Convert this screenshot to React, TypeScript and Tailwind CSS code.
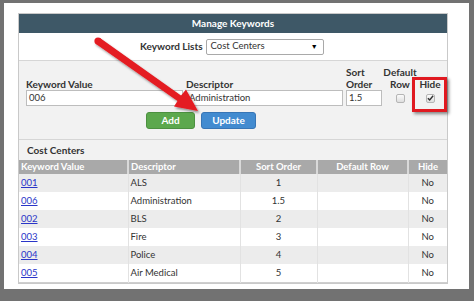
import React from 'react';

const ROWS = [
  { value: '001', descriptor: 'ALS', sort: '1', hide: 'No' },
  { value: '006', descriptor: 'Administration', sort: '1.5', hide: 'No' },
  { value: '002', descriptor: 'BLS', sort: '2', hide: 'No' },
  { value: '003', descriptor: 'Fire', sort: '3', hide: 'No' },
  { value: '004', descriptor: 'Police', sort: '4', hide: 'No' },
  { value: '005', descriptor: 'Air Medical', sort: '5', hide: 'No' },
];

function Checkbox({ checked }: { checked?: boolean }) {
  return (
    <span className="flex h-[9px] w-[9px] items-center justify-center rounded-[2px] border border-[#b5b5b5] bg-gradient-to-b from-[#fbfbfb] to-[#dedede]">
      {checked && (
        <svg width="8" height="8" viewBox="0 0 8 8">
          <path d="M1 4.2 L3.1 6.3 L7 1.5" fill="none" stroke="#333" strokeWidth="1.6" />
        </svg>
      )}
    </span>
  );
}

export default function App() {
  return (
    <div className="relative h-[301px] w-[474px] overflow-hidden bg-[#727272] pb-[12px] pl-[4px] pr-[5px] pt-[3px] font-['Lato',sans-serif] text-[9.5px] text-[#333]">
      {/* White frame */}
      <div className="h-[286px] w-[465px] bg-white pl-[14px] pt-[10px]">
        {/* Panel */}
        <div className="flex w-[430px] flex-col border border-[#c9c9c9]">
          {/* Header */}
          <div className="flex h-[19px] items-center justify-center bg-[#3e5867] text-[10px] font-bold text-white">
            Manage Keywords
          </div>

          {/* Keyword list picker */}
          <div className="flex h-[27px] items-center gap-[3px] bg-white pl-[121px]">
            <span className="text-[10px] font-bold">Keyword Lists</span>
            <div className="flex h-[16px] w-[118px] items-center justify-between rounded-[2px] border border-[#a9a9a9] bg-white pl-[4px] pr-[5px]">
              <span>Cost Centers</span>
              <span className="text-[7px] text-black">▼</span>
            </div>
          </div>

          {/* Edit form */}
          <div className="flex flex-col gap-[6px] border-t border-[#d6d6d6] bg-[#f2f2f2] pb-[10px] pl-[7px] pt-[5px]">
            <div className="flex items-end gap-[3px] leading-[12px]">
              <div className="flex w-[157px] flex-col">
                <span className="text-[10px] font-bold">Keyword Value</span>
                <div className="flex h-[16px] items-center border border-[#bdbdbd] bg-white pl-[2px]">006</div>
              </div>
              <div className="flex w-[157px] flex-col">
                <span className="text-[10px] font-bold">Descriptor</span>
                <div className="flex h-[16px] items-center border border-[#bdbdbd] bg-white pl-[2px]">Administration</div>
              </div>
              <div className="flex w-[36px] flex-col">
                <span className="text-[10px] font-bold">Sort</span>
                <span className="text-[10px] font-bold">Order</span>
                <div className="flex h-[16px] items-center border border-[#bdbdbd] bg-white pl-[2px]">1.5</div>
              </div>
              <div className="flex w-[30px] flex-col items-center">
                <span className="text-[10px] font-bold">Default</span>
                <span className="text-[10px] font-bold">Row</span>
                <div className="flex h-[16px] items-center">
                  <Checkbox />
                </div>
              </div>
              <div className="ml-[-1px] flex w-[26px] flex-col items-center">
                <span className="text-[10px] font-bold">Hide</span>
                <div className="flex h-[16px] items-center">
                  <Checkbox checked />
                </div>
              </div>
            </div>
            <div className="flex gap-[6px] pl-[120px]">
              <button className="flex h-[17px] w-[49px] items-center justify-center rounded-[3px] border border-[#4c9040] bg-[#5ca84d] text-[10px] font-bold text-white">
                Add
              </button>
              <button className="flex h-[17px] w-[55px] items-center justify-center rounded-[3px] border border-[#3775b5] bg-[#428bd0] text-[10px] font-bold text-white">
                Update
              </button>
            </div>
          </div>

          {/* Cost Centers table */}
          <div className="flex flex-col border-t border-[#d6d6d6] bg-[#f2f2f2]">
            <div className="flex h-[20px] items-center pl-[8px] text-[10px] font-bold">Cost Centers</div>
            <table className="w-full table-fixed border-collapse border-b border-[#cfcfcf]">
              <colgroup>
                <col className="w-[109px]" />
                <col className="w-[112px]" />
                <col className="w-[77px]" />
                <col className="w-[91px]" />
                <col className="w-[39px]" />
              </colgroup>
              <thead>
                <tr className="h-[14px] bg-[#a9a9a9] text-white">
                  <th className="p-0 pl-[2px] text-left font-bold">Keyword Value</th>
                  <th className="border-l-2 border-[#d9d9d9] p-0 pl-[2px] text-left font-bold">Descriptor</th>
                  <th className="border-l-2 border-[#d9d9d9] p-0 text-center font-bold">Sort Order</th>
                  <th className="border-l-2 border-[#d9d9d9] p-0 text-center font-bold">Default Row</th>
                  <th className="border-l-2 border-[#d9d9d9] p-0 text-center font-bold">Hide</th>
                </tr>
              </thead>
              <tbody>
                {ROWS.map((row, i) => (
                  <tr key={row.value} className={i % 2 === 0 ? 'h-[18px] bg-[#ececec]' : 'h-[18px] bg-white'}>
                    <td className="p-0 pl-[2px]">
                      <span className="text-[#2a35c8] underline">{row.value}</span>
                    </td>
                    <td className="border-l border-[#e2e2e2] p-0 pl-[2px]">{row.descriptor}</td>
                    <td className="border-l border-[#e2e2e2] p-0 text-center">{row.sort}</td>
                    <td className="border-l border-[#e2e2e2] p-0" />
                    <td className="border-l border-[#e2e2e2] p-0 text-center">{row.hide}</td>
                  </tr>
                ))}
              </tbody>
            </table>
          </div>
        </div>
      </div>

      {/* Annotation: highlight box around Hide */}
      <div className="absolute left-[412px] top-[77px] h-[35px] w-[35px] border-[3px] border-[#e01920] shadow-[2px_2px_3px_rgba(0,0,0,0.45)]" />

      {/* Annotation: arrow */}
      <svg className="pointer-events-none absolute left-0 top-0" width="474" height="301">
        <defs>
          <filter id="arrowShadow" x="-10%" y="-10%" width="130%" height="130%">
            <feDropShadow dx="1.5" dy="2" stdDeviation="1.2" floodColor="#000" floodOpacity="0.4" />
          </filter>
        </defs>
        <g filter="url(#arrowShadow)">
          <polygon
            points="100,38 181,95.5 186,89.5 198,111 174,106.5 177.5,101 96,44"
            fill="#e41b22"
          />
          <circle cx="98" cy="41" r="3.6" fill="#e41b22" />
        </g>
      </svg>
    </div>
  );
}
